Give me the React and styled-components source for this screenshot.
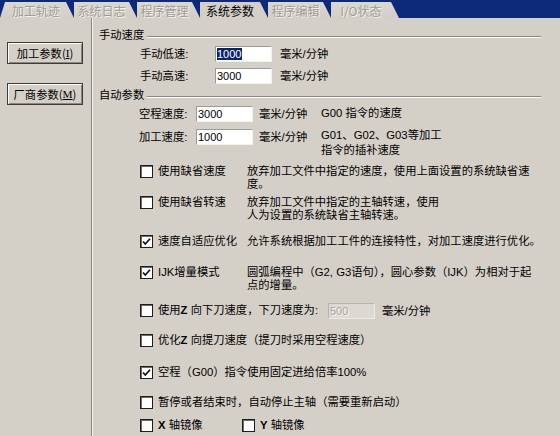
import React from 'react';
import styled, { createGlobalStyle } from 'styled-components';

const Global = createGlobalStyle`
    html, body {
        margin: 0;
        padding: 0;
        background: #d4d0c8;
    }
    body {
        font-family: "Liberation Sans", "Noto Sans CJK SC", sans-serif;
        font-size: 11.3px;
        color: #000;
    }
`;

const tabs = [
    { label: '加工轨迹', width: 74 },
    { label: '系统日志', width: 63 },
    { label: '程序管理', width: 63 },
    { label: '系统参数', width: 68, active: true },
    { label: '程序编辑', width: 63 },
    { label: 'I/O状态', width: 68 },
];

export default function App() {
    return (
        <Window>
            <Global />
            <TabBar>
                {tabs.map((t, i) => (
                    <Tab key={t.label} $w={t.width} $first={i === 0} $active={t.active}>
                        {t.label}
                    </Tab>
                ))}
            </TabBar>
            <Body>
                <Side>
                    <SideButton>加工参数(<u>I</u>)</SideButton>
                    <SideButton>厂商参数(<u>M</u>)</SideButton>
                </Side>
                <Main>
                    <Group>
                        <span>手动速度</span>
                        <Etch />
                    </Group>
                    <FieldRow $top={3} $indent={41}>
                        <Label $w={75}>手动低速:</Label>
                        <Field $w={57}><Selected>1000</Selected></Field>
                        <Unit $gap={8}>毫米/分钟</Unit>
                    </FieldRow>
                    <FieldRow $top={5} $indent={41}>
                        <Label $w={75}>手动高速:</Label>
                        <Field $w={57}>3000</Field>
                        <Unit $gap={8}>毫米/分钟</Unit>
                    </FieldRow>

                    <Group $top={4}>
                        <span>自动参数</span>
                        <Etch />
                    </Group>
                    <FieldRow $top={3} $indent={40}>
                        <Label $w={57}>空程速度:</Label>
                        <Field $w={57}>3000</Field>
                        <Unit $gap={6} $w={62}>毫米/分钟</Unit>
                        <Note $lh={15}>G00 指令的速度</Note>
                    </FieldRow>
                    <FieldRow $top={6} $indent={40} $alignTop>
                        <Label $w={57}>加工速度:</Label>
                        <Field $w={57}>1000</Field>
                        <Unit $gap={6} $w={62}>毫米/分钟</Unit>
                        <Note $lh={15}>G01、G02、G03等加工<br />指令的插补速度</Note>
                    </FieldRow>

                    <CheckRow $top={7}>
                        <Box />
                        <CheckLabel $w={89}>使用缺省速度</CheckLabel>
                        <Note>放弃加工文件中指定的速度，使用上面设置的系统缺省速<br />度。</Note>
                    </CheckRow>
                    <CheckRow $top={5}>
                        <Box />
                        <CheckLabel $w={89}>使用缺省转速</CheckLabel>
                        <Note>放弃加工文件中指定的主轴转速，使用<br />人为设置的系统缺省主轴转速。</Note>
                    </CheckRow>
                    <CheckRow $top={13}>
                        <Box $checked />
                        <CheckLabel $w={89}>速度自适应优化</CheckLabel>
                        <Note>允许系统根据加工工件的连接特性，对加工速度进行优化。</Note>
                    </CheckRow>
                    <CheckRow $top={18}>
                        <Box $checked />
                        <CheckLabel $w={89}>IJK增量模式</CheckLabel>
                        <Note>圆弧编程中（G2, G3语句），圆心参数（IJK）为相对于起<br />点的增量。</Note>
                    </CheckRow>
                    <CheckRow $top={10} $center>
                        <Box />
                        <CheckLabel $w={170}>使用<b>Z</b> 向下刀速度，下刀速度为:</CheckLabel>
                        <Field $w={47} $disabled>500</Field>
                        <Unit $gap={7}>毫米/分钟</Unit>
                    </CheckRow>
                    <CheckRow $top={15}>
                        <Box />
                        <CheckLabel>优化<b>Z</b> 向提刀速度（提刀时采用空程速度）</CheckLabel>
                    </CheckRow>
                    <CheckRow $top={19}>
                        <Box $checked />
                        <CheckLabel>空程（G00）指令使用固定进给倍率100%</CheckLabel>
                    </CheckRow>
                    <CheckRow $top={17}>
                        <Box />
                        <CheckLabel>暂停或者结束时，自动停止主轴（需要重新启动）</CheckLabel>
                    </CheckRow>
                    <CheckRow $top={10}>
                        <Box />
                        <CheckLabel $w={84}><b>X</b> 轴镜像</CheckLabel>
                        <Box />
                        <CheckLabel><b>Y</b> 轴镜像</CheckLabel>
                    </CheckRow>
                </Main>
            </Body>
        </Window>
    );
}

function Box({ $checked }) {
    return (
        <CheckBox>
            {$checked && (
                <svg width="11" height="11" viewBox="0 0 11 11">
                    <polyline points="2,5.5 4.3,8 9,2.8" fill="none" stroke="#111" strokeWidth="1.7" />
                </svg>
            )}
        </CheckBox>
    );
}

const Window = styled.div`
    width: 560px;
    height: 436px;
    display: flex;
    flex-direction: column;
    overflow: hidden;
    background: #d4d0c8;
`;

const TabBar = styled.div`
    height: 18px;
    flex: none;
    display: flex;
    align-items: flex-end;
    background: #0d2a7a;
`;

const Tab = styled.div`
    width: ${p => p.$w}px;
    height: 16px;
    flex: none;
    box-sizing: border-box;
    padding-right: ${p => (p.$first ? 6 : 8)}px;
    padding-left: ${p => (p.$first ? 4 : 0)}px;
    display: flex;
    align-items: center;
    justify-content: center;
    font-family: "Noto Sans CJK SC", sans-serif;
    font-size: 12px;
    background: ${p =>
        p.$active
            ? '#d4d0c8'
            : 'linear-gradient(to bottom, #dbd8d2, #d2cec6)'};
    color: ${p => (p.$active ? '#000' : '#a09c95')};
    text-shadow: ${p => (p.$active ? 'none' : '1px 1px 0 #f4f2ee')};
    clip-path: ${p =>
        p.$first
            ? 'polygon(5px 0, calc(100% - 8px) 0, 100% 100%, 0 100%)'
            : 'polygon(0 0, calc(100% - 8px) 0, 100% 100%, 0 100%)'};
`;

const Body = styled.div`
    flex: 1;
    display: flex;
`;

const Side = styled.div`
    width: 92px;
    flex: none;
    box-sizing: border-box;
    padding: 24px 0 0 7px;
    display: flex;
    flex-direction: column;
    gap: 19px;
    border-right: 1px solid #8a8780;
    box-shadow: 1px 0 0 #f6f5f2;
`;

const SideButton = styled.div`
    width: 76px;
    height: 22px;
    box-sizing: border-box;
    display: flex;
    align-items: center;
    justify-content: center;
    border: 1px solid #3c3c3c;
    box-shadow: inset 1px 1px 0 #ffffff, inset -1px -1px 0 #8a8780;
    background: #d4d0c8;
    font-family: "Noto Sans CJK SC", sans-serif;

    u {
        font-family: "Liberation Serif", serif;
    }
`;

const Main = styled.div`
    flex: 1;
    box-sizing: border-box;
    padding: 10px 20px 0 7px;
    display: flex;
    flex-direction: column;

    b {
        font-family: "Liberation Sans", sans-serif;
        font-weight: bold;
    }
`;

const Group = styled.div`
    height: 14px;
    margin-top: ${p => p.$top || 0}px;
    display: flex;
    align-items: center;
    line-height: 14px;
`;

const Etch = styled.div`
    flex: 1;
    margin: 4px 0 0 3px;
    border-top: 1px solid #8a8780;
    border-bottom: 1px solid #ffffff;
`;

const FieldRow = styled.div`
    display: flex;
    align-items: ${p => (p.$alignTop ? 'flex-start' : 'center')};
    margin-top: ${p => p.$top || 0}px;
    padding-left: ${p => p.$indent}px;
`;

const Label = styled.span`
    width: ${p => p.$w}px;
    flex: none;
    line-height: 16px;
    margin-top: 1px;
    white-space: nowrap;
`;

const Field = styled.div`
    width: ${p => p.$w}px;
    height: 16px;
    flex: none;
    box-sizing: border-box;
    margin-top: 1px;
    padding-left: 1px;
    display: flex;
    align-items: center;
    font-family: "Liberation Sans", sans-serif;
    font-size: 11px;
    background: ${p => (p.$disabled ? '#dcd9d3' : '#ffffff')};
    color: ${p => (p.$disabled ? '#a9a69f' : '#000')};
    text-shadow: ${p => (p.$disabled ? '1px 1px 0 #f7f6f3' : 'none')};
    border: 1px solid;
    border-color: ${p =>
        p.$disabled ? '#b8b5ae #eeece8 #eeece8 #b8b5ae' : '#9c9a94 #f2f1ee #f2f1ee #9c9a94'};
`;

const Selected = styled.span`
    background: #0a246a;
    color: #fff;
    line-height: 12px;
    padding-right: 1px;
`;

const Unit = styled.span`
    margin-left: ${p => p.$gap}px;
    width: ${p => (p.$w ? `${p.$w}px` : 'auto')};
    flex: none;
    line-height: 16px;
    margin-top: 1px;
    white-space: nowrap;
`;

const Note = styled.div`
    line-height: ${p => p.$lh || 13}px;
    white-space: nowrap;
`;

const CheckRow = styled.div`
    display: flex;
    align-items: ${p => (p.$center ? 'center' : 'flex-start')};
    margin-top: ${p => p.$top || 0}px;
    padding-left: 41px;
`;

const CheckBox = styled.span`
    width: 13px;
    height: 13px;
    flex: none;
    box-sizing: border-box;
    display: flex;
    align-items: center;
    justify-content: center;
    background: #fff;
    border: 1px solid #1e1e1e;
    box-shadow: inset 1px 1px 0 #6e6c68;
`;

const CheckLabel = styled.span`
    margin-left: 5px;
    width: ${p => (p.$w ? `${p.$w}px` : 'auto')};
    flex: none;
    line-height: 13px;
    white-space: nowrap;
`;
